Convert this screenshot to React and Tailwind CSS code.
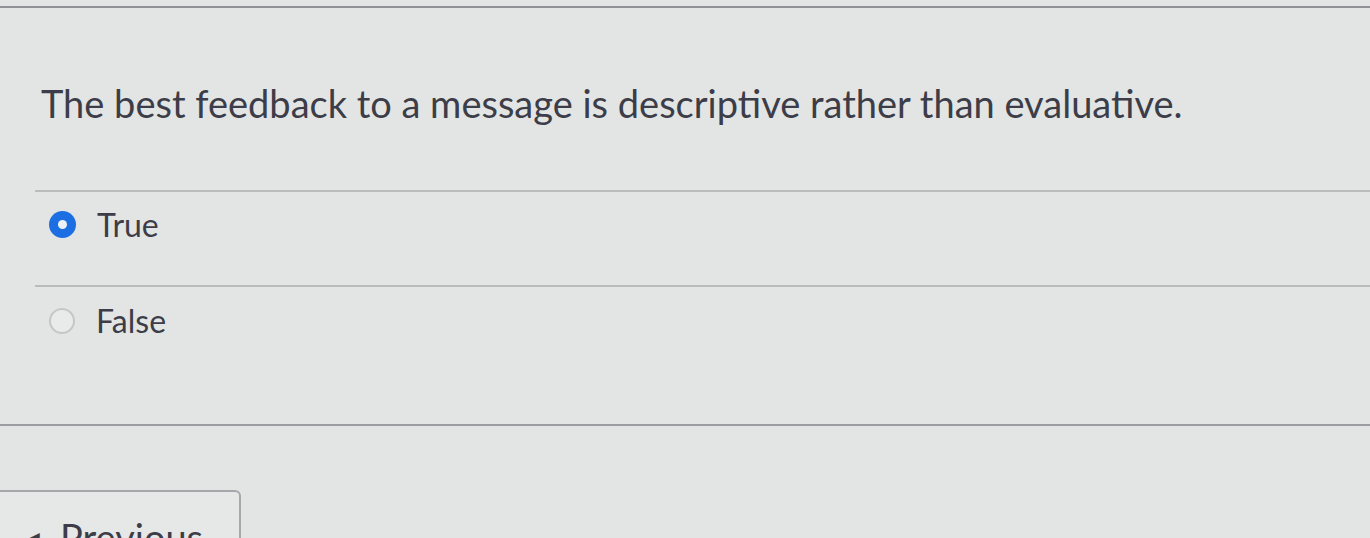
import { useState } from "react";

const options = ["True", "False"];

function Radio({ checked }) {
  return checked ? (
    <span className="flex h-[27px] w-[27px] items-center justify-center rounded-full bg-[#1b6fe3]">
      <span className="h-[9px] w-[9px] rounded-full bg-[#eef1f3]" />
    </span>
  ) : (
    <span className="h-[26px] w-[26px] rounded-full border-2 border-[#c4c7c8] bg-[#e9ebea]" />
  );
}

export default function App() {
  const [answer, setAnswer] = useState("True");

  return (
    <div
      className="h-[538px] w-full overflow-hidden bg-[#e3e5e4] text-[#3c3d48]"
      style={{ fontFamily: "Lato, 'Open Sans', sans-serif" }}
    >
      <div className="mt-[6px] h-[2px] bg-[#8e9294]" />

      {/* Question */}
      <div className="pl-[41px] pt-[70px]">
        <h2 className="text-[38px] leading-[50px]">
          The best feedback to a message is descriptive rather than evaluative.
        </h2>
      </div>

      {/* Answers */}
      <div className="ml-[35px] mt-[62px]">
        {options.map((opt) => (
          <div key={opt} className="border-t-2 border-[#b9bcbd]">
            <button
              onClick={() => setAnswer(opt)}
              className={`flex items-center gap-[21px] pl-[14px] ${
                opt === "True" ? "h-[93px] pb-[28px]" : "h-[137px] pb-[70px]"
              }`}
            >
              <Radio checked={answer === opt} />
              <span className="text-[32px]">{opt}</span>
            </button>
          </div>
        ))}
      </div>

      <div className="h-[2px] bg-[#9a9d9f]" />

      {/* Footer nav */}
      <div className="mt-[64px]">
        <button className="flex h-[60px] w-[241px] items-start gap-[20px] rounded-tr-[6px] border-2 border-l-0 border-[#a6a9ab] bg-[#e6e8e7] pl-[29px] pt-[26px] text-[38px] leading-none">
          <span className="mt-[12px] text-[14px]">◀</span>
          <span>Previous</span>
        </button>
      </div>
    </div>
  );
}
